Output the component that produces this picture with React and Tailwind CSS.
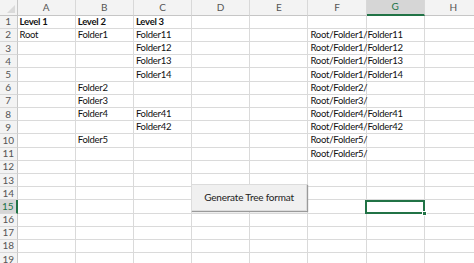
import React from 'react';

const COLS = ['A', 'B', 'C', 'D', 'E', 'F', 'G', 'H'];
const ROWS = 19;

// row -> { colIndex: text }
const data = {
  1: { 0: 'Level 1', 1: 'Level 2', 2: 'Level 3' },
  2: { 0: 'Root', 1: 'Folder1', 2: 'Folder11', 5: 'Root/Folder1/Folder11' },
  3: { 2: 'Folder12', 5: 'Root/Folder1/Folder12' },
  4: { 2: 'Folder13', 5: 'Root/Folder1/Folder13' },
  5: { 2: 'Folder14', 5: 'Root/Folder1/Folder14' },
  6: { 1: 'Folder2', 5: 'Root/Folder2/' },
  7: { 1: 'Folder3', 5: 'Root/Folder3/' },
  8: { 1: 'Folder4', 2: 'Folder41', 5: 'Root/Folder4/Folder41' },
  9: { 2: 'Folder42', 5: 'Root/Folder4/Folder42' },
  10: { 1: 'Folder5', 5: 'Root/Folder5/' },
  11: { 5: 'Root/Folder5/' },
};

function Corner() {
  return (
    <div className="relative bg-[#f3f3f3] border-r border-b border-[#c6c6c6]">
      <svg className="absolute right-[2px] bottom-[2px]" width="8" height="8" viewBox="0 0 8 8">
        <polygon points="8,0 8,8 0,8" fill="#dadada" />
      </svg>
    </div>
  );
}

function ColHeader({ label }) {
  const sel = label === 'G';
  return (
    <div
      className={
        'flex items-center justify-center border-r border-[#d8d8d8] text-[10px] ' +
        (sel
          ? 'bg-[#d6d6d6] text-[#217346] border-b-2 border-b-[#217346]'
          : 'bg-[#f3f3f3] text-[#555] border-b border-b-[#c6c6c6]')
      }
    >
      {label}
    </div>
  );
}

function RowHeader({ n }) {
  const sel = n === 15;
  return (
    <div
      className={
        'flex items-center justify-center border-b border-[#d8d8d8] text-[10px] ' +
        (sel
          ? 'bg-[#d6d6d6] text-[#217346] border-r-2 border-r-[#217346]'
          : 'bg-[#f3f3f3] text-[#555] border-r border-r-[#c6c6c6]')
      }
    >
      {n}
    </div>
  );
}

export default function App() {
  const rows = [];
  for (let r = 1; r <= ROWS; r++) {
    rows.push(<RowHeader key={'h' + r} n={r} />);
    COLS.forEach((c, i) => {
      const text = data[r] && data[r][i];
      rows.push(
        <div
          key={c + r}
          className={
            'flex items-center pl-[2px] border-r border-b border-[#dadada] whitespace-nowrap overflow-visible text-[9.5px] tracking-[-0.25px] leading-[12px] text-[#111] ' +
            (r === 1 ? 'font-bold' : '')
          }
        >
          {text || ''}
        </div>
      );
    });
  }

  return (
    <div
      className="relative w-[474px] h-[263px] overflow-hidden bg-white"
      style={{ fontFamily: 'Lato, "Open Sans", sans-serif' }}
    >
      <div className="grid grid-cols-[17.5px_repeat(8,58.2px)] grid-rows-[15.7px_repeat(19,13.2px)]">
        <Corner />
        {COLS.map((c) => (
          <ColHeader key={c} label={c} />
        ))}
        {rows}
      </div>

      {/* active cell G15 */}
      <div className="absolute left-[365px] top-[200px] w-[59.5px] h-[14px] border-2 border-[#217346]">
        <div className="absolute right-[-4px] bottom-[-4px] w-[5px] h-[5px] bg-[#217346] border border-white" />
      </div>

      {/* floating button */}
      <div className="absolute left-[191px] top-[184px] w-[116px] h-[27px] flex items-center justify-center bg-[#f0f0f0] border border-[#dcdcdc] shadow-[1px_1px_1px_#9a9a9a] text-[10px] tracking-[-0.2px] text-[#222]">
        Generate Tree format
      </div>
    </div>
  );
}
